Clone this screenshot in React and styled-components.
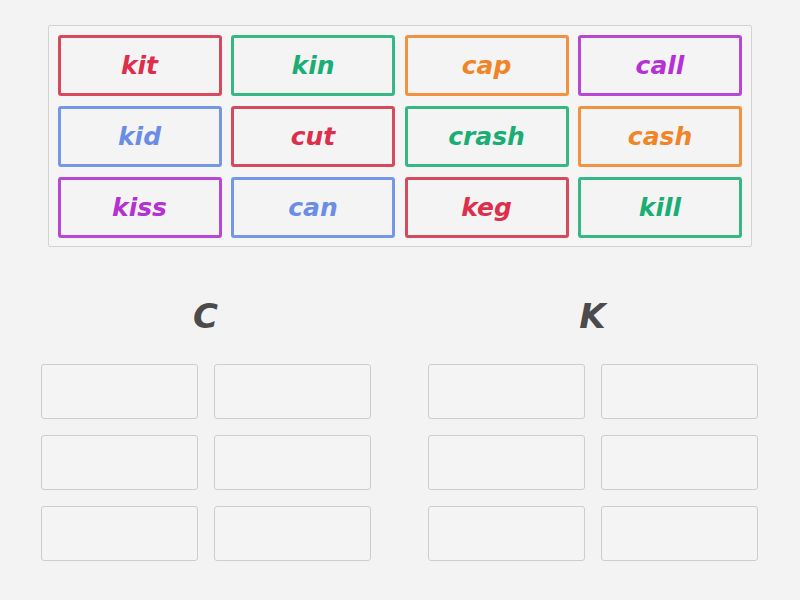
import styled, { createGlobalStyle } from "styled-components";

const Global = createGlobalStyle`
  html, body {
    margin: 0;
    padding: 0;
    background: #f4f3f4;
    font-family: "DejaVu Sans", sans-serif;
  }
`;

const Page = styled.div`
  width: 800px;
  height: 600px;
  display: flex;
  flex-direction: column;
  align-items: center;
  padding-top: 25px;
  box-sizing: border-box;
`;

const Bank = styled.div`
  width: 704px;
  box-sizing: border-box;
  margin-left: -1px;
  border: 1px solid #d2d2d2;
  border-radius: 2px;
  background: #f5f5f5;
  padding: 9px 8px 8px 9px;
  display: grid;
  grid-template-columns: repeat(4, 164px);
  grid-auto-rows: 61px;
  column-gap: 9.5px;
  row-gap: 10px;
`;

const Tile = styled.div`
  box-sizing: border-box;
  border: 3px solid ${(p) => p.$border};
  border-radius: 3px;
  background: #f5f4f5;
  display: flex;
  align-items: center;
  justify-content: center;
  color: ${(p) => p.$color};
  font-family: "DejaVu Sans", sans-serif;
  font-weight: bold;
  font-style: italic;
  font-size: 25px;
`;

const Groups = styled.div`
  display: flex;
  gap: 57px;
  margin-top: 49px;
  margin-left: -2px;
`;

const Group = styled.div`
  display: flex;
  flex-direction: column;
  align-items: center;
`;

const Title = styled.div`
  font-family: "DejaVu Sans", sans-serif;
  font-weight: bold;
  font-style: italic;
  font-size: 34px;
  color: #4b4b4b;
  height: 40px;
  line-height: 40px;
  margin-bottom: 28px;
`;

const Slots = styled.div`
  display: grid;
  grid-template-columns: repeat(2, 157px);
  grid-auto-rows: 55px;
  column-gap: 16px;
  row-gap: 16px;
`;

const Slot = styled.div`
  box-sizing: border-box;
  border: 1.5px solid #cdcdcd;
  border-radius: 3px;
  background: #f5f4f5;
`;

const RED = { b: "#d64a5d", c: "#dc2f4c" };
const GREEN = { b: "#35b885", c: "#1aae74" };
const ORANGE = { b: "#f2923f", c: "#f08528" };
const PURPLE = { b: "#b947d6", c: "#b431d3" };
const BLUE = { b: "#7597e8", c: "#6a8ee6" };

const words = [
  ["kit", RED],
  ["kin", GREEN],
  ["cap", ORANGE],
  ["call", PURPLE],
  ["kid", BLUE],
  ["cut", RED],
  ["crash", GREEN],
  ["cash", ORANGE],
  ["kiss", PURPLE],
  ["can", BLUE],
  ["keg", RED],
  ["kill", GREEN],
];

export default function App() {
  return (
    <>
      <Global />
      <Page>
        <Bank>
          {words.map(([w, col]) => (
            <Tile key={w} $border={col.b} $color={col.c}>
              {w}
            </Tile>
          ))}
        </Bank>
        <Groups>
          {["C", "K"].map((g) => (
            <Group key={g}>
              <Title>{g}</Title>
              <Slots>
                {[0, 1, 2, 3, 4, 5].map((i) => (
                  <Slot key={i} />
                ))}
              </Slots>
            </Group>
          ))}
        </Groups>
      </Page>
    </>
  );
}
